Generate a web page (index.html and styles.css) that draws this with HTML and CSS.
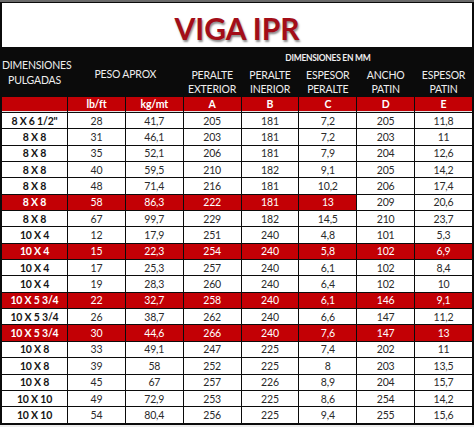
FILE: index.html
```html
<!DOCTYPE html>
<html lang="es">
<head>
    <meta charset="UTF-8">
    <meta name="viewport" content="width=device-width, initial-scale=1.0">
    <title>Viga IPR</title>
    <link rel="stylesheet" href="styles.css">
</head>
<body>
    <div class="sheet">
        <div class="title">
            <h1>VIGA IPR</h1>
        </div>

        <table class="ipr-table">
            <colgroup>
                <col class="c-dim">
                <col><col><col><col><col><col><col>
            </colgroup>
            <thead>
                <tr class="head-top">
                    <th rowspan="2" class="two-lines">DIMENSIONES<br>PULGADAS</th>
                    <th rowspan="2" colspan="2" class="peso">PESO APROX</th>
                    <th colspan="5" class="group">DIMENSIONES EN MM</th>
                </tr>
                <tr class="head-names">
                    <th>PERALTE<br>EXTERIOR</th>
                    <th>PERALTE<br>INERIOR</th>
                    <th>ESPESOR<br>PERALTE</th>
                    <th>ANCHO<br>PATIN</th>
                    <th>ESPESOR<br>PATIN</th>
                </tr>
                <tr class="head-units">
                    <th></th>
                    <th>lb/ft</th>
                    <th>kg/mt</th>
                    <th>A</th>
                    <th>B</th>
                    <th>C</th>
                    <th>D</th>
                    <th>E</th>
                </tr>
            </thead>
            <tbody>
                <tr><td>8 X 6 1/2"</td><td>28</td><td>41,7</td><td>205</td><td>181</td><td>7,2</td><td>205</td><td>11,8</td></tr>
                <tr><td>8 X 8</td><td>31</td><td>46,1</td><td>203</td><td>181</td><td>7,2</td><td>203</td><td>11</td></tr>
                <tr><td>8 X 8</td><td>35</td><td>52,1</td><td>206</td><td>181</td><td>7,9</td><td>204</td><td>12,6</td></tr>
                <tr><td>8 X 8</td><td>40</td><td>59,5</td><td>210</td><td>182</td><td>9,1</td><td>205</td><td>14,2</td></tr>
                <tr><td>8 X 8</td><td>48</td><td>71,4</td><td>216</td><td>181</td><td>10,2</td><td>206</td><td>17,4</td></tr>
                <tr class="partial"><td class="hl">8 X 8</td><td class="hl">58</td><td class="hl">86,3</td><td class="hl">222</td><td class="hl">181</td><td class="hl">13</td><td>209</td><td>20,6</td></tr>
                <tr><td>8 X 8</td><td>67</td><td>99,7</td><td>229</td><td>182</td><td>14,5</td><td>210</td><td>23,7</td></tr>
                <tr><td>10 X 4</td><td>12</td><td>17,9</td><td>251</td><td>240</td><td>4,8</td><td>101</td><td>5,3</td></tr>
                <tr class="red"><td>10 X 4</td><td>15</td><td>22,3</td><td>254</td><td>240</td><td>5,8</td><td>102</td><td>6,9</td></tr>
                <tr><td>10 X 4</td><td>17</td><td>25,3</td><td>257</td><td>240</td><td>6,1</td><td>102</td><td>8,4</td></tr>
                <tr><td>10 X 4</td><td>19</td><td>28,3</td><td>260</td><td>240</td><td>6,4</td><td>102</td><td>10</td></tr>
                <tr class="red"><td>10 X 5 3/4</td><td>22</td><td>32,7</td><td>258</td><td>240</td><td>6,1</td><td>146</td><td>9,1</td></tr>
                <tr><td>10 X 5 3/4</td><td>26</td><td>38,7</td><td>262</td><td>240</td><td>6,6</td><td>147</td><td>11,2</td></tr>
                <tr class="red"><td>10 X 5 3/4</td><td>30</td><td>44,6</td><td>266</td><td>240</td><td>7,6</td><td>147</td><td>13</td></tr>
                <tr><td>10 X 8</td><td>33</td><td>49,1</td><td>247</td><td>225</td><td>7,4</td><td>202</td><td>11</td></tr>
                <tr><td>10 X 8</td><td>39</td><td>58</td><td>252</td><td>225</td><td>8</td><td>203</td><td>13,5</td></tr>
                <tr><td>10 X 8</td><td>45</td><td>67</td><td>257</td><td>226</td><td>8,9</td><td>204</td><td>15,7</td></tr>
                <tr><td>10 X 10</td><td>49</td><td>72,9</td><td>253</td><td>225</td><td>8,6</td><td>254</td><td>14,2</td></tr>
                <tr><td>10 X 10</td><td>54</td><td>80,4</td><td>256</td><td>225</td><td>9,4</td><td>255</td><td>15,6</td></tr>
            </tbody>
        </table>
    </div>
</body>
</html>
```

FILE: styles.css
```css
body {
    margin: 0;
    background-color: #ececec;
    font-family: Lato, "Open Sans", sans-serif;
}
.sheet {
    width: 472px;
    padding: 1px 1px 1px;
    background-color: #0b0b0b;
    border-top: 2px solid #6a6a6a;
}
.title {
    height: 44px;
    margin: 0 1px;
    background-color: #ffffff;
    display: flex;
    justify-content: center;
    align-items: center;
}
.title h1 {
    margin: 6px 0 0;
    font-size: 30px;
    font-weight: 700;
    line-height: 1;
    color: #a30d18;
    text-shadow: 1px 2px 2px rgba(0, 0, 0, 0.45);
}
.ipr-table {
    width: 100%;
    table-layout: fixed;
    border-collapse: separate;
    border-spacing: 1px;
    font-size: 10.5px;
    letter-spacing: -0.2px;
}
.c-dim {
    width: 65px;
}
th, td {
    padding: 0;
    text-align: center;
    vertical-align: middle;
}
thead th {
    color: #eeeeee;
    font-weight: 400;
    line-height: 14px;
}
.head-top {
    height: 18px;
}
.head-top .two-lines {
    line-height: 15px;
    padding-top: 2px;
}
.head-top .peso {
    padding-top: 3px;
}
.head-top .group {
    font-size: 8.5px;
    font-weight: 700;
    letter-spacing: -0.3px;
    padding-top: 2px;
}
.head-names {
    height: 29px;
}
.head-names th {
    padding-top: 1px;
}
.head-units th {
    height: 14px;
    background-color: #c30005;
    color: #ffffff;
    font-weight: 700;
    border-bottom: 1px solid #e4e4e4;
}
tbody tr {
    height: 15.35px;
}
tbody td {
    background-color: #ffffff;
    color: #2a2a2a;
    line-height: 12px;
}
tbody td:first-child {
    font-weight: 700;
    color: #151515;
}
tbody .red td,
tbody td.hl {
    background-color: #c30005;
    color: #ffffff;
}
```
